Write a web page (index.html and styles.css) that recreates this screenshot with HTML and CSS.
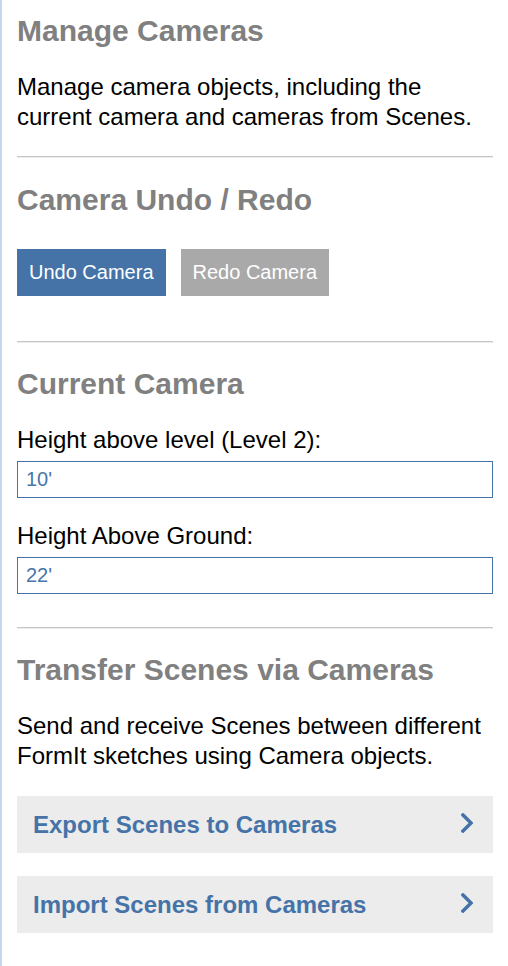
FILE: index.html
```html
<html>
    <head>
        <title>Manage Cameras</title>
        <meta name="viewport" content="width=device-width, initial-scale=1.0">
        <link rel="stylesheet" href="styles.css">
    </head>
    <body>
        <div class="panel">
            <section class="block">
                <h2>Manage Cameras</h2>
                <p class="desc">Manage camera objects, including the current camera and cameras from Scenes.</p>
            </section>
            <hr>
            <section class="block">
                <h2>Camera Undo / Redo</h2>
                <div class="btn-row">
                    <button class="btn btn-primary">Undo Camera</button>
                    <button class="btn btn-disabled">Redo Camera</button>
                </div>
            </section>
            <hr class="hr-wide">
            <section class="block">
                <h2>Current Camera</h2>
                <label class="field">
                    <span>Height above level (Level 2):</span>
                    <input type="text" value="10'">
                </label>
                <label class="field">
                    <span>Height Above Ground:</span>
                    <input type="text" value="22'">
                </label>
            </section>
            <hr class="hr-mid">
            <section class="block">
                <h2>Transfer Scenes via Cameras</h2>
                <p class="desc">Send and receive Scenes between different FormIt sketches using Camera objects.</p>
                <div class="collapsible">
                    <span>Export Scenes to Cameras</span>
                    <svg class="chevron" viewBox="0 0 12 20" width="12" height="20">
                        <path d="M2 2 L10 10 L2 18" fill="none" stroke="#4573a8" stroke-width="3.4" stroke-linecap="square" stroke-linejoin="miter"/>
                    </svg>
                </div>
                <div class="collapsible">
                    <span>Import Scenes from Cameras</span>
                    <svg class="chevron" viewBox="0 0 12 20" width="12" height="20">
                        <path d="M2 2 L10 10 L2 18" fill="none" stroke="#4573a8" stroke-width="3.4" stroke-linecap="square" stroke-linejoin="miter"/>
                    </svg>
                </div>
            </section>
        </div>
    </body>
</html>
```

FILE: styles.css
```css
* {
    font-family: "Liberation Sans", Arial, sans-serif;
    box-sizing: border-box;
}

html, body {
    margin: 0;
    padding: 0;
    height: 100%;
    background-color: #ffffff;
}

body {
    border-left: 2px solid #c8d8ec;
}

.panel {
    padding: 13px 15px 0 15px;
}

.block h2 {
    margin: 0;
    font-size: 30px;
    line-height: 36px;
    font-weight: bold;
    color: #808080;
}

.desc {
    margin: 23px 0 0 0;
    font-size: 24px;
    line-height: 30px;
    color: #000000;
}

hr {
    margin: 24px 0 24px 0;
    height: 0;
    border: none;
    border-top: 1px solid #c6c6c6;
    border-bottom: 1px solid #ececec;
}

.hr-wide {
    margin-top: 45px;
    margin-bottom: 23px;
}

.hr-mid {
    margin-top: 33px;
    margin-bottom: 23px;
}

.btn-row {
    display: flex;
    gap: 15px;
    margin-top: 31px;
}

.btn {
    height: 47px;
    padding: 0 12px;
    border: none;
    font-size: 20px;
    color: #ffffff;
    cursor: pointer;
}

.btn-primary {
    background-color: #4573a8;
}

.btn-disabled {
    background-color: #a9a9a9;
}

.field {
    display: block;
    margin-top: 23px;
}

.field span {
    display: block;
    font-size: 24px;
    line-height: 30px;
    color: #000000;
}

.field input {
    display: block;
    width: 100%;
    height: 37px;
    margin-top: 6px;
    padding: 0 8px;
    border: 1px solid #4573a8;
    border-radius: 0;
    outline: none;
    font-size: 20px;
    color: #4a76aa;
    background-color: #ffffff;
}

.collapsible {
    display: flex;
    align-items: center;
    justify-content: space-between;
    height: 57px;
    margin-top: 25px;
    padding: 0 20px 0 16px;
    background-color: #ececec;
    cursor: pointer;
}

.collapsible + .collapsible {
    margin-top: 23px;
}

.collapsible span {
    font-size: 24px;
    font-weight: bold;
    color: #4573a8;
}

.chevron {
    margin-top: -4px;
}
```
